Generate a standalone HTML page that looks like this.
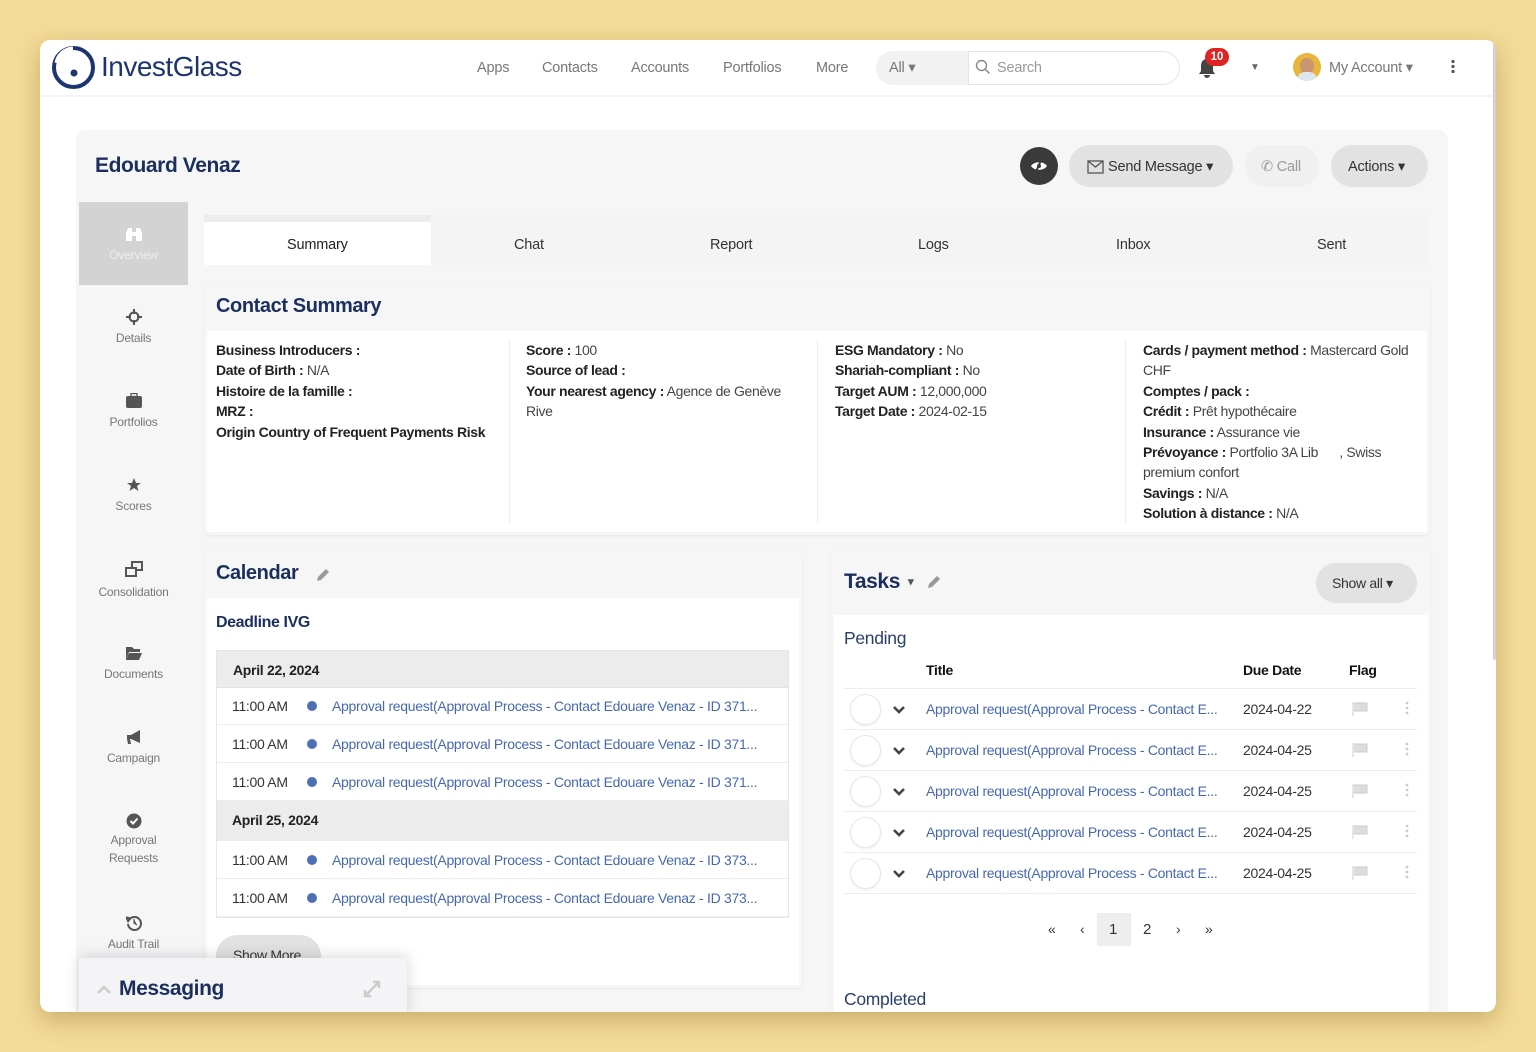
<!DOCTYPE html>
<html><head><meta charset="utf-8">
<style>
*{box-sizing:border-box;margin:0;padding:0}
body{width:1536px;height:1052px;overflow:hidden;background:#f3db98;font-family:"Liberation Sans",sans-serif;position:relative}
.a{position:absolute;white-space:nowrap}
.win{left:40px;top:40px;width:1456px;height:972px;background:#fff;border-radius:10px;overflow:hidden;box-shadow:0 8px 24px rgba(120,90,20,.35)}
.nav{font-size:14.5px;color:#777;letter-spacing:-.2px}
.t{font-size:14px;letter-spacing:-.35px;color:#444;line-height:20.4px;white-space:normal}
.t b{color:#222}
.h{color:#1b2f5e;font-weight:bold;letter-spacing:-.4px}
.side{left:79px;width:109px;text-align:center;font-size:12px;color:#777;letter-spacing:-.2px;white-space:normal}
.side svg{display:block;margin:0 auto 6px}
.row{position:absolute;left:216px;width:573px;height:38px;border-bottom:1px solid #eee;font-size:14px;letter-spacing:-.3px}
.row .tm{position:absolute;left:16px;top:11px;color:#333}
.row .dot{position:absolute;left:91px;top:14px;width:10px;height:10px;border-radius:50%;background:#4f6fb5}
.row .l{position:absolute;left:116px;top:11px;color:#4668b3;white-space:nowrap}
.dr{position:absolute;left:216px;width:573px;background:#ececec;font-weight:bold;font-size:14px;color:#222;padding:11px 16px;height:38px;letter-spacing:-.3px}
.tr{position:absolute;left:844px;width:573px;height:41px;border-bottom:1px solid #eee;font-size:14px;letter-spacing:-.3px;white-space:nowrap}
.tr .c{position:absolute;left:6px;top:5px;width:31px;height:31px;border-radius:50%;border:1px solid #e6e6e6;box-shadow:0 1px 2px rgba(0,0,0,.08)}
.tr .v{position:absolute;left:48px;top:14px}
.tr .l{position:absolute;left:82px;top:12px;color:#4668b3}
.tr .d{position:absolute;left:399px;top:12px;color:#333}
.tr .f{position:absolute;left:508px;top:13px}
.tr .m{position:absolute;left:561px;top:12px}
</style></head><body>
<div class="a win">
  <div class="a" style="left:0;top:0;width:1456px;height:57px;border-bottom:2px solid #f4f4f6"></div>
  <svg class="a" style="left:11px;top:5px" width="45" height="45" viewBox="0 0 45 45"><circle cx="22.5" cy="22.5" r="19.5" fill="none" stroke="#1d3470" stroke-width="4"/><path d="M6 18 A17 17 0 0 1 22 4" stroke="#fff" stroke-width="5" fill="none"/><circle cx="23" cy="28" r="3.5" fill="#1d3470"/></svg>
  <div class="a" style="left:61px;top:11px;font-size:28px;color:#1d3470;letter-spacing:-.5px">InvestGlass</div>
  <div class="a nav" style="left:437px;top:20px">Apps</div>
  <div class="a nav" style="left:502px;top:20px">Contacts</div>
  <div class="a nav" style="left:591px;top:20px">Accounts</div>
  <div class="a nav" style="left:683px;top:20px">Portfolios</div>
  <div class="a nav" style="left:776px;top:20px">More</div>
  <div class="a" style="left:836px;top:11px;width:95px;height:34px;background:#f2f2f2;border-radius:17px 0 0 17px"></div>
  <div class="a nav" style="left:849px;top:20px">All ▾</div>
  <div class="a" style="left:928px;top:11px;width:212px;height:34px;border:1px solid #e4e4e4;border-radius:0 17px 17px 0;background:#fff"></div>
  <svg class="a" style="left:935px;top:19px" width="16" height="16"><circle cx="6.5" cy="6.5" r="5" fill="none" stroke="#888" stroke-width="1.4"/><path d="M10 10l4.5 4.5" stroke="#888" stroke-width="1.4"/></svg>
  <div class="a nav" style="left:957px;top:20px;color:#999">Search</div>
  <svg class="a" style="left:1158px;top:18px" width="18" height="20"><path d="M9 1c-4 0-6 3-6 7v5l-2 3h16l-2-3V8c0-4-2-7-6-7z M6 17h6a3 3 0 0 1-6 0" fill="#444"/></svg>
  <div class="a" style="left:1165px;top:8px;width:24px;height:18px;border-radius:9px;background:#e02424;color:#fff;font-size:11.5px;font-weight:bold;text-align:center;line-height:18px">10</div>
  <div class="a" style="left:1210px;top:22px;font-size:10px;color:#666">▼</div>
  <div class="a" style="left:1253px;top:13px;width:28px;height:28px;border-radius:50%;background:#e8b63c;overflow:hidden"><div style="margin:5px auto 0;width:14px;height:16px;border-radius:7px;background:#c99670"></div><div style="margin:-2px auto 0;width:20px;height:10px;border-radius:8px 8px 0 0;background:#dde6ef"></div></div>
  <div class="a nav" style="left:1289px;top:20px">My Account ▾</div>
  <div class="a" style="left:1411px;top:19px;width:4px;height:15px;background:radial-gradient(circle,#555 1.6px,transparent 1.8px) 0 0/4px 5px"></div>
  <div class="a" style="left:1453px;top:0;width:3px;height:620px;background:#d0d0d6;border-radius:2px"></div>

  <div class="a" style="left:36px;top:90px;width:1372px;height:900px;background:#f6f6f7;border-radius:10px"></div>
  <div class="a h" style="left:55px;top:114px;font-size:21px">Edouard Venaz</div>
  <div class="a" style="left:980px;top:107px;width:38px;height:38px;border-radius:50%;background:#3a3a3a"></div>
  <svg class="a" style="left:990px;top:118px" width="18" height="16"><path d="M1 8c3-5 13-5 16 0c-3 5-13 5-16 0z" fill="#fff"/><path d="M11 2l-5 12" stroke="#3a3a3a" stroke-width="2"/><circle cx="9" cy="8" r="2" fill="#3a3a3a"/></svg>
  <div class="a" style="left:1029px;top:105px;width:164px;height:42px;border-radius:21px;background:#e2e2e2"></div>
  <svg class="a" style="left:1047px;top:120px" width="17" height="14"><rect x="1" y="1" width="15" height="12" fill="none" stroke="#555" stroke-width="1.3"/><path d="M1 1l7.5 6L16 1" fill="none" stroke="#555" stroke-width="1.3"/></svg>
  <div class="a nav" style="left:1068px;top:119px;color:#333">Send Message ▾</div>
  <div class="a" style="left:1205px;top:105px;width:74px;height:42px;border-radius:21px;background:#f0f0f0"></div>
  <div class="a nav" style="left:1221px;top:119px;color:#999">✆ Call</div>
  <div class="a" style="left:1291px;top:105px;width:97px;height:42px;border-radius:21px;background:#e2e2e2"></div>
  <div class="a nav" style="left:1308px;top:119px;color:#333">Actions ▾</div>

  <div class="a" style="left:39px;top:162px;width:109px;height:828px;background:#f6f6f7"></div>
  <div class="a" style="left:39px;top:162px;width:109px;height:83px;background:#d3d3d3"></div>
  <div class="a side" style="left:39px;top:184px;color:#eee"><svg width="18" height="18"><path d="M3 4h4v13H1V9zM11 4h4l2 5v8h-6z M7 8h4v4H7z" fill="#fff"/></svg>Overview</div>
  <div class="a side" style="left:39px;top:269px"><svg width="16" height="16"><circle cx="8" cy="8" r="4.5" fill="none" stroke="#555" stroke-width="2"/><path d="M8 0v5M8 11v5M0 8h5M11 8h5" stroke="#555" stroke-width="2"/></svg>Details</div>
  <div class="a side" style="left:39px;top:353px"><svg width="18" height="16"><rect x="1" y="3" width="16" height="12" rx="2" fill="#555"/><rect x="6" y="0.5" width="6" height="3" fill="none" stroke="#555" stroke-width="1.3"/></svg>Portfolios</div>
  <div class="a side" style="left:39px;top:437px"><svg width="16" height="16"><path d="M8 1l2 5h5l-4 3 1.5 5L8 11l-4.5 3L5 9 1 6h5z" fill="#555"/></svg>Scores</div>
  <div class="a side" style="left:39px;top:521px"><svg width="20" height="18"><rect x="8" y="1" width="10" height="8" fill="none" stroke="#555" stroke-width="2"/><rect x="2" y="7" width="10" height="8" fill="#f6f6f7" stroke="#555" stroke-width="2"/></svg>Consolidation</div>
  <div class="a side" style="left:39px;top:605px"><svg width="18" height="16"><path d="M1 2h6l2 2h6v3H4l-3 8z M4 8h13l-3 7H1z" fill="#555"/></svg>Documents</div>
  <div class="a side" style="left:39px;top:689px"><svg width="18" height="16"><path d="M2 6h4l9-5v13L6 10H5l1 5H3l-1-5z" fill="#555"/></svg>Campaign</div>
  <div class="a side" style="left:39px;top:773px;line-height:18px"><svg width="16" height="16" style="margin-bottom:2px"><circle cx="8" cy="8" r="7.5" fill="#555"/><path d="M4.5 8l2.5 2.5 4.5-5" stroke="#fff" stroke-width="2" fill="none"/></svg>Approval<br>Requests</div>
  <div class="a side" style="left:39px;top:875px"><svg width="16" height="16"><path d="M3 5A6.5 6.5 0 1 1 2 9" fill="none" stroke="#555" stroke-width="2"/><path d="M0 2l5 1-3 4z M8 4v4l3 2" fill="#555" stroke="#555" stroke-width="1.2"/></svg>Audit Trail</div>

  <div class="a" style="left:164px;top:175px;width:1224px;height:50px;background:#f4f4f5"></div>
  <div class="a" style="left:164px;top:175px;width:227px;height:50px;background:#fff;border-top:7px solid #ececec"></div>
  <div class="a nav" style="left:247px;top:197px;color:#222">Summary</div>
  <div class="a nav" style="left:474px;top:197px;color:#333">Chat</div>
  <div class="a nav" style="left:670px;top:197px;color:#333">Report</div>
  <div class="a nav" style="left:878px;top:197px;color:#333">Logs</div>
  <div class="a nav" style="left:1076px;top:197px;color:#333">Inbox</div>
  <div class="a nav" style="left:1277px;top:197px;color:#333">Sent</div>

  <div class="a" style="left:164px;top:243px;width:1226px;height:252px;background:#f6f6f7;border-radius:6px;box-shadow:0 1px 3px rgba(0,0,0,.06)"></div>
  <div class="a" style="left:167px;top:291px;width:1220px;height:201px;background:#fff"></div>
  <div class="a h" style="left:176px;top:255px;font-size:20px">Contact Summary</div>
  <div class="a" style="left:469px;top:300px;width:1px;height:183px;background:#eee"></div>
  <div class="a" style="left:777px;top:300px;width:1px;height:183px;background:#eee"></div>
  <div class="a" style="left:1085px;top:300px;width:1px;height:183px;background:#eee"></div>
  <div class="a t" style="left:176px;top:300px;width:290px"><b>Business Introducers :</b><br><b>Date of Birth :</b> N/A<br><b>Histoire de la famille :</b><br><b>MRZ :</b><br><b>Origin Country of Frequent Payments Risk</b></div>
  <div class="a t" style="left:486px;top:300px;width:285px"><b>Score :</b> 100<br><b>Source of lead :</b><br><b>Your nearest agency :</b> Agence de Genève Rive</div>
  <div class="a t" style="left:795px;top:300px;width:285px"><b>ESG Mandatory :</b> No<br><b>Shariah-compliant :</b> No<br><b>Target AUM :</b> 12,000,000<br><b>Target Date :</b> 2024-02-15</div>
  <div class="a t" style="left:1103px;top:300px;width:282px"><b>Cards / payment method :</b> Mastercard Gold CHF<br><b>Comptes / pack :</b><br><b>Crédit :</b> Prêt hypothécaire<br><b>Insurance :</b> Assurance vie<br><b>Prévoyance :</b> Portfolio 3A Lib &nbsp; &nbsp; &nbsp;, Swiss premium confort<br><b>Savings :</b> N/A<br><b>Solution à distance :</b> N/A</div>

  <div class="a" style="left:164px;top:510px;width:598px;height:438px;background:#f6f6f7;border-radius:6px;box-shadow:0 1px 3px rgba(0,0,0,.06)"></div>
  <div class="a" style="left:167px;top:558px;width:592px;height:387px;background:#fff"></div>
  <div class="a h" style="left:176px;top:522px;font-size:20px">Calendar</div>
  <svg class="a" style="left:275px;top:528px" width="15" height="15"><path d="M2 13l1-4 8-8 3 3-8 8z" fill="#999"/></svg>
  <div class="a h" style="left:176px;top:574px;font-size:16px">Deadline IVG</div>
  <div style="position:absolute;left:-40px;top:-40px">
    <div class="dr" style="top:650px;border:1px solid #e2e2e2">April 22, 2024</div>
    <div class="row" style="top:687px"><span class="tm">11:00 AM</span><span class="dot"></span><span class="l">Approval request(Approval Process - Contact Edouare Venaz - ID 371...</span></div>
    <div class="row" style="top:725px"><span class="tm">11:00 AM</span><span class="dot"></span><span class="l">Approval request(Approval Process - Contact Edouare Venaz - ID 371...</span></div>
    <div class="row" style="top:763px"><span class="tm">11:00 AM</span><span class="dot"></span><span class="l">Approval request(Approval Process - Contact Edouare Venaz - ID 371...</span></div>
    <div class="dr" style="top:801px;height:40px">April 25, 2024</div>
    <div class="row" style="top:841px"><span class="tm">11:00 AM</span><span class="dot"></span><span class="l">Approval request(Approval Process - Contact Edouare Venaz - ID 373...</span></div>
    <div class="row" style="top:879px"><span class="tm">11:00 AM</span><span class="dot"></span><span class="l">Approval request(Approval Process - Contact Edouare Venaz - ID 373...</span></div>
    <div class="a" style="left:216px;top:650px;width:573px;height:268px;border:1px solid #e6e6e6"></div>
    <div class="a" style="left:216px;top:935px;width:105px;height:42px;border-radius:21px;background:#e2e2e2;font-size:14px;color:#333;padding:12px 17px;letter-spacing:-.3px">Show More</div>

    <div class="a" style="left:831px;top:550px;width:600px;height:480px;background:#f6f6f7;border-radius:6px;box-shadow:0 1px 3px rgba(0,0,0,.06)"></div>
    <div class="a" style="left:834px;top:615px;width:594px;height:420px;background:#fff"></div>
    <div class="a h" style="left:844px;top:570px;font-size:21px">Tasks <span style="font-size:11px;color:#555;vertical-align:middle">▼</span></div>
    <svg class="a" style="left:926px;top:575px" width="15" height="15"><path d="M2 13l1-4 8-8 3 3-8 8z" fill="#999"/></svg>
    <div class="a" style="left:1316px;top:563px;width:101px;height:40px;border-radius:20px;background:#e2e2e2;font-size:14px;color:#333;padding:12px 16px;letter-spacing:-.3px">Show all ▾</div>
    <div class="a" style="left:844px;top:628px;font-size:17.5px;color:#2a3f6e;letter-spacing:-.3px">Pending</div>
    <div class="a" style="left:926px;top:662px;font-size:14px;font-weight:bold;color:#111;letter-spacing:-.3px">Title</div>
    <div class="a" style="left:1243px;top:662px;font-size:14px;font-weight:bold;color:#111;letter-spacing:-.3px">Due Date</div>
    <div class="a" style="left:1349px;top:662px;font-size:14px;font-weight:bold;color:#111;letter-spacing:-.3px">Flag</div>
    <div class="a" style="left:844px;top:688px;width:573px;height:1px;background:#eee"></div>
    <div class="tr" style="top:689px"><span class="c"></span><svg class="v" width="14" height="14"><path d="M2 4l5 5 5-5" stroke="#444" stroke-width="2.6" fill="none"/></svg><span class="l">Approval request(Approval Process - Contact E...</span><span class="d">2024-04-22</span><svg class="f" width="16" height="14"><path d="M1 0v14M2 1h13v8H2" fill="#ddd" stroke="#ccc"/></svg><svg class="m" width="4" height="14"><circle cx="2" cy="2" r="1.4" fill="#ccc"/><circle cx="2" cy="7" r="1.4" fill="#ccc"/><circle cx="2" cy="12" r="1.4" fill="#ccc"/></svg></div>
    <div class="tr" style="top:730px"><span class="c"></span><svg class="v" width="14" height="14"><path d="M2 4l5 5 5-5" stroke="#444" stroke-width="2.6" fill="none"/></svg><span class="l">Approval request(Approval Process - Contact E...</span><span class="d">2024-04-25</span><svg class="f" width="16" height="14"><path d="M1 0v14M2 1h13v8H2" fill="#ddd" stroke="#ccc"/></svg><svg class="m" width="4" height="14"><circle cx="2" cy="2" r="1.4" fill="#ccc"/><circle cx="2" cy="7" r="1.4" fill="#ccc"/><circle cx="2" cy="12" r="1.4" fill="#ccc"/></svg></div>
    <div class="tr" style="top:771px"><span class="c"></span><svg class="v" width="14" height="14"><path d="M2 4l5 5 5-5" stroke="#444" stroke-width="2.6" fill="none"/></svg><span class="l">Approval request(Approval Process - Contact E...</span><span class="d">2024-04-25</span><svg class="f" width="16" height="14"><path d="M1 0v14M2 1h13v8H2" fill="#ddd" stroke="#ccc"/></svg><svg class="m" width="4" height="14"><circle cx="2" cy="2" r="1.4" fill="#ccc"/><circle cx="2" cy="7" r="1.4" fill="#ccc"/><circle cx="2" cy="12" r="1.4" fill="#ccc"/></svg></div>
    <div class="tr" style="top:812px"><span class="c"></span><svg class="v" width="14" height="14"><path d="M2 4l5 5 5-5" stroke="#444" stroke-width="2.6" fill="none"/></svg><span class="l">Approval request(Approval Process - Contact E...</span><span class="d">2024-04-25</span><svg class="f" width="16" height="14"><path d="M1 0v14M2 1h13v8H2" fill="#ddd" stroke="#ccc"/></svg><svg class="m" width="4" height="14"><circle cx="2" cy="2" r="1.4" fill="#ccc"/><circle cx="2" cy="7" r="1.4" fill="#ccc"/><circle cx="2" cy="12" r="1.4" fill="#ccc"/></svg></div>
    <div class="tr" style="top:853px"><span class="c"></span><svg class="v" width="14" height="14"><path d="M2 4l5 5 5-5" stroke="#444" stroke-width="2.6" fill="none"/></svg><span class="l">Approval request(Approval Process - Contact E...</span><span class="d">2024-04-25</span><svg class="f" width="16" height="14"><path d="M1 0v14M2 1h13v8H2" fill="#ddd" stroke="#ccc"/></svg><svg class="m" width="4" height="14"><circle cx="2" cy="2" r="1.4" fill="#ccc"/><circle cx="2" cy="7" r="1.4" fill="#ccc"/><circle cx="2" cy="12" r="1.4" fill="#ccc"/></svg></div>
    <div class="a" style="left:1097px;top:913px;width:34px;height:33px;background:#eee"></div>
    <div class="a" style="left:1048px;top:921px;font-size:14px;color:#333">«</div>
    <div class="a" style="left:1080px;top:921px;font-size:14px;color:#333">‹</div>
    <div class="a" style="left:1109px;top:921px;font-size:15px;color:#333">1</div>
    <div class="a" style="left:1143px;top:921px;font-size:15px;color:#333">2</div>
    <div class="a" style="left:1176px;top:921px;font-size:14px;color:#333">›</div>
    <div class="a" style="left:1205px;top:921px;font-size:14px;color:#333">»</div>
    <div class="a" style="left:844px;top:989px;font-size:17.5px;color:#2a3f6e;letter-spacing:-.3px">Completed</div>

    <div class="a" style="left:79px;top:958px;width:328px;height:60px;background:#f4f4f6;box-shadow:0 -2px 14px rgba(0,0,0,.15)"></div>
    <svg class="a" style="left:96px;top:983px" width="16" height="12"><path d="M2 10l6-6 6 6" stroke="#ccc" stroke-width="2.6" fill="none"/></svg>
    <div class="a h" style="left:119px;top:977px;font-size:21px">Messaging</div>
    <svg class="a" style="left:362px;top:979px" width="20" height="20"><path d="M3 17L17 3M11 3h6v6M3 11v6h6" stroke="#ccc" stroke-width="2.4" fill="none"/></svg>
  </div>
</div>
</body></html>
